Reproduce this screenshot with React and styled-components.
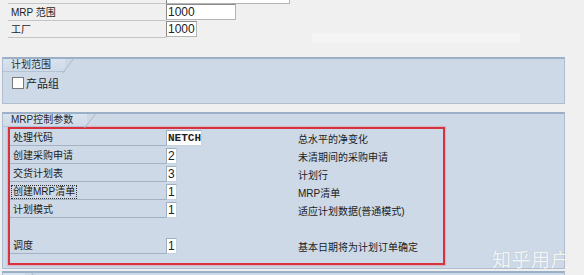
import React from 'react';
import styled, { createGlobalStyle } from 'styled-components';

const Global = createGlobalStyle`
  html, body { margin: 0; padding: 0; background: #f0f0f0; }
  body {
    font-family: "Liberation Sans", "Noto Sans CJK SC", sans-serif;
    font-size: 10px;
    color: #1c1c1c;
    overflow: hidden;
  }
`;

const Page = styled.div`
  position: relative;
  width: 584px;
  height: 275px;
  overflow: hidden;
  background: #f0f0f0;
`;

const TopSection = styled.div`
  display: flex;
  flex-direction: column;
  padding-left: 8px;
  height: 57px;
`;

const FieldRow = styled.div`
  display: flex;
  align-items: flex-end;
  height: ${(p) => p.$h || 17}px;
  overflow: hidden;
`;

const TopLabel = styled.div`
  box-sizing: border-box;
  width: 158px;
  height: 16px;
  flex: none;
  padding-left: 3px;
  line-height: 15px;
  white-space: nowrap;
  border-bottom: 1px solid #c4c4c4;
`;

const TextBox = styled.div`
  box-sizing: border-box;
  width: ${(p) => p.$w}px;
  height: 16px;
  flex: none;
  background: #fff;
  border: 1px solid #b4b4b4;
  border-top-color: #8a8a8a;
  border-left-color: #8a8a8a;
  font-family: "Liberation Sans", sans-serif;
  font-size: 12px;
  line-height: 14px;
  padding-left: 1px;
  color: #222;
  margin-bottom: ${(p) => p.$mb || 0}px;
`;

const Group = styled.section`
  box-sizing: border-box;
  margin: 0 19px 0 2px;
  height: ${(p) => p.$h}px;
  background: #cdd9e7;
  border: 1px solid #aebdcf;
  border-top: 2px solid #9bb0c7;
  display: flex;
  flex-direction: column;
  align-items: flex-start;
`;

const GroupGap = styled.div`
  height: ${(p) => p.$h}px;
`;

const Tab = styled.div`
  position: relative;
  box-sizing: border-box;
  height: 13px;
  padding: 0 14px 0 8px;
  line-height: 12px;
  white-space: nowrap;
  color: #2a2a2a;
  background: linear-gradient(#d9e3ef, #cfdae8);
  border-bottom: 1px solid #b5c3d4;
  &::after {
    content: "";
    position: absolute;
    right: 2px;
    top: -1px;
    width: 1px;
    height: 15px;
    background: #a8b8cb;
    transform: skewX(-38deg);
    transform-origin: bottom left;
  }
`;

const CheckRow = styled.label`
  display: flex;
  align-items: center;
  gap: 2px;
  margin: 4px 0 0 9px;
  height: 14px;
  font-size: 11px;
`;

const CheckBox = styled.span`
  box-sizing: border-box;
  width: 12px;
  height: 12px;
  background: #fff;
  border: 1px solid #7a7a7a;
  display: inline-block;
`;

const Annotated = styled.div`
  box-sizing: border-box;
  width: 437px;
  margin: 0 0 0 5px;
  height: 138px;
  border: 2px solid #d8323e;
  box-shadow: 0 0 1px 1px rgba(230, 120, 130, 0.35);
  display: flex;
  flex-direction: column;
`;

const ParamRow = styled.div`
  display: grid;
  grid-template-columns: 156px 131px 1fr;
  align-items: center;
  height: 18px;
`;

const ParamLabel = styled.div`
  box-sizing: border-box;
  height: 16px;
  padding-left: 2px;
  line-height: 15px;
  white-space: nowrap;
  border-bottom: ${(p) => (p.$blank ? 'none' : '1px solid #a3b2c4')};
  span {
    display: inline-block;
    line-height: 12px;
    padding: 0 1px;
    margin-left: -1px;
    border: 1px dotted ${(p) => (p.$focus ? '#333' : 'transparent')};
  }
`;

const ValueBox = styled.div`
  box-sizing: border-box;
  width: ${(p) => p.$w}px;
  height: 16px;
  background: #fff;
  border: 1px solid #c8d2de;
  border-top-color: #9eaec2;
  border-left-color: #9eaec2;
  font-family: ${(p) => (p.$mono ? '"Liberation Mono", monospace' : '"Liberation Sans", sans-serif')};
  font-weight: ${(p) => (p.$mono ? 700 : 400)};
  font-size: ${(p) => (p.$mono ? 11 : 12)}px;
  line-height: 14px;
  padding-left: 1px;
  color: #222;
`;

const Desc = styled.div`
  white-space: nowrap;
  padding-left: 1px;
`;

const Watermark = styled.div`
  position: absolute;
  left: 492px;
  top: 245px;
  font-family: "Noto Sans CJK SC", sans-serif;
  font-size: 19px;
  letter-spacing: 0.5px;
  color: rgba(255, 255, 255, 0.85);
  text-shadow: 0 0 1px rgba(120, 120, 120, 0.35);
  pointer-events: none;
`;

const FaintBar = styled.div`
  position: absolute;
  left: 312px;
  top: 33px;
  width: 208px;
  height: 10px;
  background: rgba(255, 255, 255, 0.3);
  pointer-events: none;
`;

const params = [
  { label: '处理代码', value: 'NETCH', w: 36, mono: true, desc: '总水平的净变化' },
  { label: '创建采购申请', value: '2', w: 11, desc: '未清期间的采购申请' },
  { label: '交货计划表', value: '3', w: 11, desc: '计划行' },
  { label: '创建MRP清单', value: '1', w: 11, desc: 'MRP清单', focus: true },
  { label: '计划模式', value: '1', w: 11, desc: '适应计划数据(普通模式)' },
  { blank: true },
  { label: '调度', value: '1', w: 11, desc: '基本日期将为计划订单确定' },
];

export default function App() {
  return (
    <Page>
      <Global />
      <TopSection>
        <FieldRow $h={4}>
          <TopLabel />
          <TextBox $w={124} />
        </FieldRow>
        <FieldRow $h={17}>
          <TopLabel>MRP 范围</TopLabel>
          <TextBox $w={70} $mb={1}>1000</TextBox>
        </FieldRow>
        <FieldRow $h={17}>
          <TopLabel>工厂</TopLabel>
          <TextBox $w={31} $mb={1}>1000</TextBox>
        </FieldRow>
      </TopSection>

      <Group $h={47}>
        <Tab>计划范围</Tab>
        <CheckRow>
          <CheckBox />
          产品组
        </CheckRow>
      </Group>
      <GroupGap $h={8} />
      <Group $h={157}>
        <Tab>MRP控制参数</Tab>
        <Annotated>
          {params.map((p, i) =>
            p.blank ? (
              <ParamRow key={i}>
                <ParamLabel $blank />
              </ParamRow>
            ) : (
              <ParamRow key={i}>
                <ParamLabel $focus={p.focus}>
                  <span>{p.label}</span>
                </ParamLabel>
                <ValueBox $w={p.w} $mono={p.mono}>{p.value}</ValueBox>
                <Desc>{p.desc}</Desc>
              </ParamRow>
            )
          )}
        </Annotated>
      </Group>
      <GroupGap $h={2} />
      <Group $h={20}>
        <Tab> </Tab>
      </Group>

      <FaintBar />
      <Watermark>知乎用户</Watermark>
    </Page>
  );
}
